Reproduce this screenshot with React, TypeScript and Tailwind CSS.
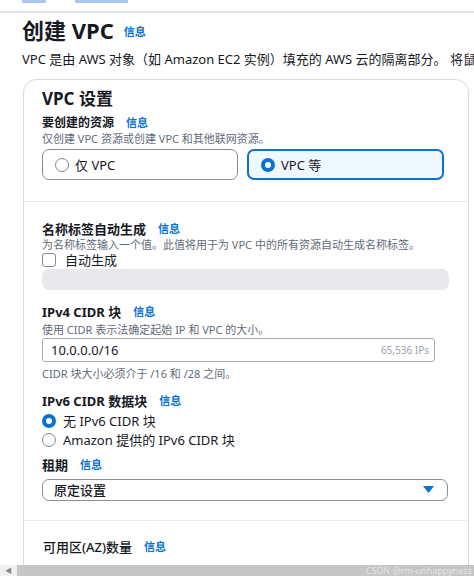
import React from "react";

const font = { fontFamily: '"Noto Sans", "Noto Sans CJK SC", sans-serif' };

function Info() {
  return <span className="text-[11px] leading-[16px] font-bold text-[#0972d3]">信息</span>;
}

function Radio({ checked }: { checked: boolean }) {
  return checked ? (
    <span className="inline-block w-[14px] h-[14px] rounded-full border-[4px] border-[#0972d3] bg-white shrink-0" />
  ) : (
    <span className="inline-block w-[14px] h-[14px] rounded-full border-[1.5px] border-[#7d8998] bg-white shrink-0" />
  );
}

export default function App() {
  return (
    <div className="w-[474px] h-[576px] bg-white flex flex-col overflow-hidden text-[#16191f]" style={font}>
      <div className="flex-1 overflow-hidden flex flex-col">
        <div className="h-[3px] flex shrink-0">
          <div className="ml-[22px] w-[24px] bg-[#a9c7ef]" />
          <div className="ml-[29px] w-[53px] bg-[#a9c7ef]" />
        </div>
        <div className="mt-[8px] h-[2px] bg-[#e2e2e2] shrink-0" />
        <div className="pl-[22px] mt-[2px] flex items-end gap-[10px] shrink-0">
          <span className="text-[22px] font-bold leading-[30px]">创建 VPC</span>
          <span className="text-[11px] font-bold text-[#0972d3] mb-[5px]">信息</span>
        </div>
        <div className="pl-[22px] mt-[5px] whitespace-nowrap text-[13px] leading-[18px] shrink-0">
          VPC 是由 AWS 对象（如 Amazon EC2 实例）填充的 AWS 云的隔离部分。 将鼠
        </div>
        <div className="ml-[23px] mt-[11px] w-[446px] flex-1 border border-b-0 border-[#dcdcdc] rounded-t-[14px]">
          <div className="pl-[18px] pr-[23px] pt-[7px] pb-[21px]">
            <div className="text-[17px] font-bold leading-[24px]">VPC 设置</div>
            <div className="mt-[4px] flex items-center gap-[12px] h-[16px]">
              <span className="text-[12px] font-bold leading-[16px]">要创建的资源</span>
              <Info />
            </div>
            <div className="text-[11px] leading-[15px] text-[#5f6b7a]">仅创建 VPC 资源或创建 VPC 和其他联网资源。</div>
            <div className="mt-[3px] flex gap-[9px]">
              <div className="w-[196px] h-[31px] border-[1.5px] border-[#8d8d8d] rounded-[7px] flex items-center pl-[12px] gap-[6px]">
                <Radio checked={false} />
                <span className="text-[13px] leading-[18px]">仅 VPC</span>
              </div>
              <div className="w-[197px] h-[31px] border-[2px] border-[#0972d3] bg-[#f0f8ff] rounded-[7px] flex items-center pl-[12px] gap-[6px]">
                <Radio checked />
                <span className="text-[13px] leading-[18px]">VPC 等</span>
              </div>
            </div>
          </div>
          <div className="h-px bg-[#e6e6e6]" />
          <div className="pl-[18px] pr-[19px] pt-[19px] pb-[19px]">
            <div className="flex items-center gap-[12px] h-[16px]">
              <span className="text-[13px] font-bold leading-[16px]">名称标签自动生成</span>
              <Info />
            </div>
            <div className="text-[11px] leading-[15px] text-[#5f6b7a]">为名称标签输入一个值。此值将用于为 VPC 中的所有资源自动生成名称标签。</div>
            <div className="flex items-center gap-[9px] h-[16px]">
              <span className="w-[14px] h-[14px] border-[1.5px] border-[#7d8998] rounded-[3px] bg-white" />
              <span className="text-[13px] leading-[16px]">自动生成</span>
            </div>
            <div className="mt-[1px] w-[407px] h-[21px] rounded-[7px] bg-[#e9e9ed]" />
            <div className="mt-[14px] flex items-center gap-[12px] h-[16px]">
              <span className="text-[13px] font-bold leading-[16px]">IPv4 CIDR 块</span>
              <Info />
            </div>
            <div className="text-[11px] leading-[15px] text-[#5f6b7a] mt-[2px]">使用 CIDR 表示法确定起始 IP 和 VPC 的大小。</div>
            <div className="mt-[1px] w-[393px] h-[24px] border-[1.5px] border-[#a8a8a8] rounded-[3px] flex items-center justify-between pl-[8px] pr-[5px]">
              <span className="text-[13px] leading-[18px]">10.0.0.0/16</span>
              <span className="text-[10px] leading-[14px] text-[#9ba3ad]">65,536 IPs</span>
            </div>
            <div className="mt-[4px] text-[11px] leading-[15px] text-[#5f6b7a]">CIDR 块大小必须介于 /16 和 /28 之间。</div>
            <div className="mt-[12px] flex items-center gap-[12px] h-[16px]">
              <span className="text-[13px] font-bold leading-[16px]">IPv6 CIDR 数据块</span>
              <Info />
            </div>
            <div className="mt-[2px] flex items-center gap-[7px] h-[19px]">
              <Radio checked />
              <span className="text-[13px] leading-[18px]">无 IPv6 CIDR 块</span>
            </div>
            <div className="flex items-center gap-[7px] h-[19px]">
              <Radio checked={false} />
              <span className="text-[13px] leading-[18px]">Amazon 提供的 IPv6 CIDR 块</span>
            </div>
            <div className="mt-[8px] flex items-center gap-[12px] h-[16px]">
              <span className="text-[13px] font-bold leading-[16px]">租期</span>
              <Info />
            </div>
            <div className="mt-[6px] w-[406px] h-[22px] border-[1.5px] border-[#8d8d8d] rounded-[7px] flex items-center justify-between pl-[11px] pr-[13px]">
              <span className="text-[13px] leading-[18px] font-medium">原定设置</span>
              <svg width="11" height="8" viewBox="0 0 11 8"><path d="M0 0 H11 L5.5 7 Z" fill="#0972d3" /></svg>
            </div>
          </div>
          <div className="h-px bg-[#ececec]" />
          <div className="pl-[19px] pt-[17px] flex items-center gap-[12px] h-[35px]">
            <span className="text-[13px] font-medium leading-[18px]">可用区(AZ)数量</span>
            <Info />
          </div>
        </div>
      </div>
      <div className="h-[11px] flex shrink-0">
        <div className="w-[17px] bg-[#f0f0f0] flex items-center justify-center text-[7px] leading-[11px] text-[#888]">◀</div>
        <div className="flex-1 bg-[#c6c6c6] flex items-center justify-end pr-[2px]">
          <span className="text-[9px] leading-[11px] text-[#e4e4e4]">CSDN @rm-unhappyness</span>
        </div>
      </div>
    </div>
  );
}
